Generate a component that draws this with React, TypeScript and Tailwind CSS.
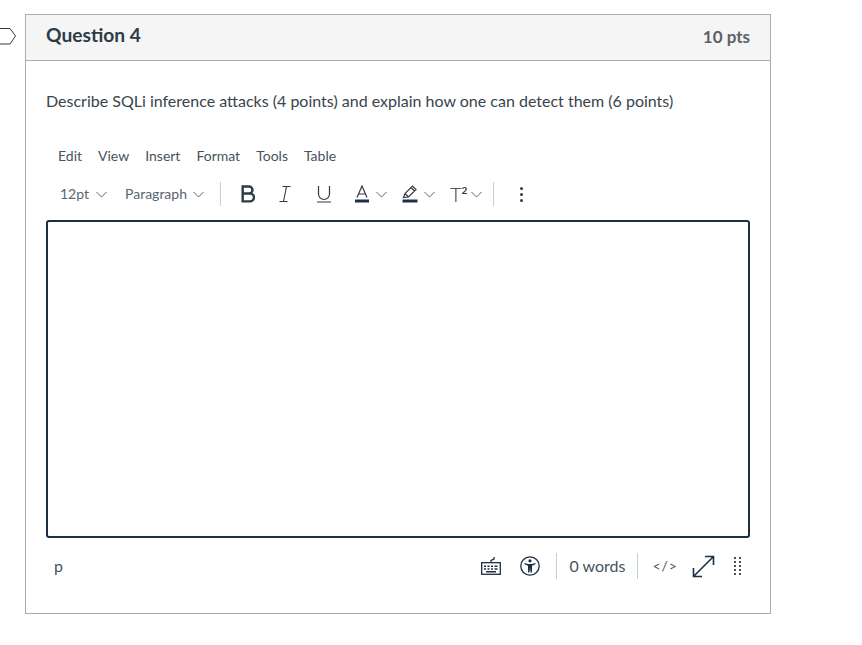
import React from 'react';

const ink = '#2d3b45';
const navy = '#1c2f45';

const Chevron = () => (
  <svg width="11" height="7" viewBox="0 0 11 7" fill="none" stroke="#5b6770" strokeWidth="1" className="shrink-0">
    <path d="M.5 1l5 5 5-5" />
  </svg>
);

const Divider = ({ className }: { className: string }) => <div className={`w-px bg-[#c7cdd1] ${className}`} />;

const MENU = ['Edit', 'View', 'Insert', 'Format', 'Tools', 'Table'];

const BoldIcon = () => (
  <svg width="15" height="18" viewBox="0 0 15 18" fill="none" stroke={ink} strokeWidth="2.4">
    <path d="M1.700 1.500h6.300a3.500 3.500 0 0 1 0 7H1.700zM1.700 8.500h7.300a3.900 3.900 0 0 1 0 7.900H1.700z" />
  </svg>
);

const ItalicIcon = () => (
  <svg width="12" height="18" viewBox="0 0 12 18" fill="none" stroke={ink} strokeWidth="1.100">
    <path d="M3.500 1.500h8M.5 16.500h8M7.500 1.500l-3 15" />
  </svg>
);

const UnderlineIcon = () => (
  <svg width="16" height="18" viewBox="0 0 16 18" fill="none" stroke={ink} strokeWidth="1.200">
    <path d="M2.500 1v8a5.500 5.500 0 0 0 11 0V1M1 17h14" />
  </svg>
);

const TextColorIcon = () => (
  <svg width="16" height="18" viewBox="0 0 16 18" fill="none" stroke={ink} strokeWidth="1.200">
    <path d="M3 12.500L8 1l5 11.500M4.500 9h7" />
    <rect x="1" y="14.500" width="14" height="3" fill={navy} stroke="none" />
  </svg>
);

const HighlightIcon = () => (
  <svg width="16" height="18" viewBox="0 0 16 18" fill="none" stroke={ink} strokeWidth="1.200">
    <path d="M1.500 12.500l1.500-4L10.500 1l3.500 3.500-7.500 7.500zM3 8.500l3.500 3.500M9 2.500l3.500 3.500" />
    <rect x="0.500" y="14.500" width="15" height="3" fill={navy} stroke="none" />
  </svg>
);

const KeyboardIcon = () => (
  <svg width="20" height="18" viewBox="0 0 20 18" fill="none" stroke={navy} strokeWidth="1.300">
    <rect x="0.700" y="5.700" width="18.600" height="11.600" />
    <path d="M10 5.500V3.500l3-1.500V0" />
    <path d="M3 9.300h2M6.500 9.300h2M10 9.300h2M13.500 9.300h3M3 12h2M6.500 12h2M10 12h2M13.500 12h3M5 14.800h10" strokeWidth="1.500" />
  </svg>
);

const AccessibilityIcon = () => (
  <svg width="20" height="20" viewBox="0 0 20 20" fill="none" stroke={navy} strokeWidth="1.300">
    <circle cx="10" cy="10" r="9.200" />
    <circle cx="10" cy="4.800" r="1.600" fill={navy} stroke="none" />
    <path d="M4.500 7l3.500 1h4l3.500-1v1.200L12 9.800V16.500h-1.400L10 12l-.6 4.500H8V9.800L4.500 8.200z" fill={navy} stroke="none" />
  </svg>
);

const ExpandIcon = () => (
  <svg width="23" height="23" viewBox="0 0 23 23" fill="none" stroke={navy} strokeWidth="1.600">
    <path d="M1.500 21.500L21.500 1.500M13 1.500h8.500V10M1.500 13v8.500H10" />
  </svg>
);

const Grip = () => (
  <div className="grid grid-cols-2 gap-x-[3px] gap-y-[2px]">
    {Array.from({ length: 10 }).map((_, i) => (
      <span key={i} className="h-[2px] w-[2px] bg-[#47535c]" />
    ))}
  </div>
);

export default function App() {
  return (
    <div className="relative h-[645px] w-[862px] overflow-hidden bg-white pl-[25px] pt-[14px] font-['Lato','Liberation_Sans',sans-serif] text-[#2d3b45]">
      {/* question flag */}
      <svg width="17" height="17" viewBox="0 0 17 17" fill="none" stroke={ink} strokeWidth="1" className="absolute left-0 top-[28px]">
        <path d="M-2 .5h12l5.500 7.500-5.500 8H-2" />
      </svg>

      <div className="flex h-[600px] w-[746px] flex-col border border-[#a9acae]">
        <div className="flex h-[46px] shrink-0 items-start justify-between border-b border-[#a9acae] bg-[#f5f5f5] px-5">
          <span className="mt-[10px] text-[19.200px] font-bold leading-5">Question 4</span>
          <span className="mt-3 text-[17px] font-bold leading-5 text-[#5a6268]">10 pts</span>
        </div>

        <div className="flex flex-1 flex-col px-5">
          <p className="mt-[30px] text-[16px] leading-5 text-[#38444c]">
            Describe SQLi inference attacks (4 points) and explain how one can detect them (6 points)
          </p>

          <div className="mt-[35px] flex h-5 items-center gap-4 pl-3 text-[14px] leading-5 text-[#47535c]">
            {MENU.map(m => (
              <span key={m}>{m}</span>
            ))}
          </div>

          <div className="mt-[15px] flex h-[26px] items-center pl-[14px] text-[14px] text-[#5a656d]">
            <span className="mb-[2px]">12pt</span>
            <span className="ml-[7px]"><Chevron /></span>
            <span className="mb-[2px] ml-[18px]">Paragraph</span>
            <span className="ml-[6px]"><Chevron /></span>
            <Divider className="ml-[16px] h-6" />
            <span className="ml-[20px]"><BoldIcon /></span>
            <span className="ml-[23px]"><ItalicIcon /></span>
            <span className="ml-[25px]"><UnderlineIcon /></span>
            <span className="ml-[22px]"><TextColorIcon /></span>
            <span className="ml-[6px]"><Chevron /></span>
            <span className="ml-[15px]"><HighlightIcon /></span>
            <span className="ml-[6px]"><Chevron /></span>
            <span className="ml-[15px] flex items-start text-[20px] font-light leading-none text-[#2d3b45]">
              T<span className="text-[10px] font-bold leading-3">2</span>
            </span>
            <span className="ml-[4px]"><Chevron /></span>
            <Divider className="ml-[11px] h-6" />
            <span className="ml-[26px] flex flex-col gap-[3px]">
              <i className="h-[3px] w-[3px] rounded-full bg-[#2d3b45]" />
              <i className="h-[3px] w-[3px] rounded-full bg-[#2d3b45]" />
              <i className="h-[3px] w-[3px] rounded-full bg-[#2d3b45]" />
            </span>
          </div>

          <div className="mt-[13px] h-[318px] w-[704px] rounded-[3px] border-2 border-[#1c2f45] bg-white" />

          <div className="mt-[15px] flex h-[26px] items-center text-[#47535c]">
            <span className="pl-2 text-[16px] leading-none">p</span>
            <span className="ml-auto"><KeyboardIcon /></span>
            <span className="ml-[19px]"><AccessibilityIcon /></span>
            <Divider className="ml-[16px] h-[26px]" />
            <span className="ml-3 text-[16px] leading-none">0 words</span>
            <Divider className="ml-3 h-[26px]" />
            <span className="ml-[14px] text-[14px] leading-none tracking-[1px]">&lt;/&gt;</span>
            <span className="ml-[14px]"><ExpandIcon /></span>
            <span className="ml-[19px] mr-[9px]"><Grip /></span>
          </div>
        </div>
      </div>
    </div>
  );
}
